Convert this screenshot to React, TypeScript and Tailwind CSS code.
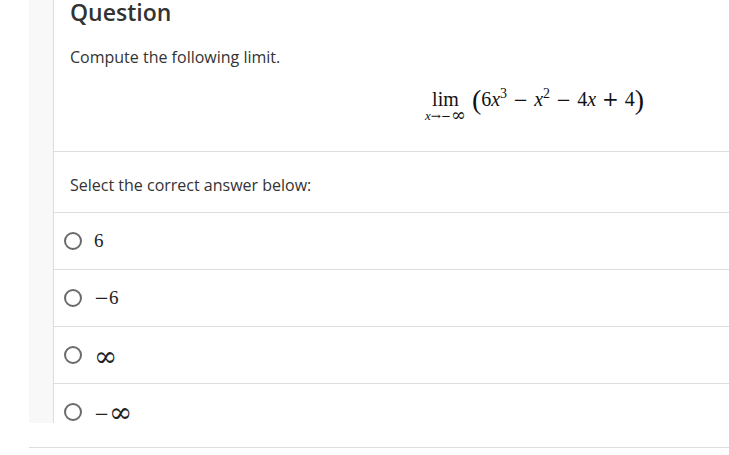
import React from "react";

const serif = { fontFamily: '"Liberation Serif", "DejaVu Serif", serif' };
const dv = { fontFamily: '"DejaVu Serif", serif' };
const dvl = { fontFamily: '"DejaVu Sans", "DejaVu Serif", serif' };

function Radio() {
  return <span className="block w-[18px] h-[18px] shrink-0 rounded-full border-2 border-[#6b6b6b] bg-white" />;
}

function Option({ children }: { children: React.ReactNode }) {
  return (
    <div className="h-[57px] shrink-0 border-b border-[#dddddd] flex items-center pl-[10px] gap-[12px]">
      <Radio />
      <span className="text-[19px] leading-[24px] text-[#222] flex items-baseline" style={serif}>
        {children}
      </span>
    </div>
  );
}

function X() {
  return <span className="italic">x</span>;
}

function Minus({ cls = "" }: { cls?: string }) {
  return (
    <span className={"font-light " + cls} style={dv}>
      −
    </span>
  );
}

function Inf({ cls = "" }: { cls?: string }) {
  return (
    <span className={"font-extralight " + cls} style={dvl}>
      ∞
    </span>
  );
}

export default function App() {
  return (
    <div
      className="w-[729px] h-[455px] bg-white overflow-hidden text-[#333333]"
      style={{ fontFamily: '"Open Sans", "Noto Sans", sans-serif' }}
    >
      <div className="ml-[29px] flex h-[423px] overflow-hidden">
        <div className="w-[25px] shrink-0 bg-[#f8f8f8] border-r border-[#dddddd]" />
        <div className="flex-1 flex flex-col">
          <section className="h-[152px] shrink-0 border-b border-[#dddddd] pl-[16px]">
            <h2 className="text-[23px] leading-[24px] font-semibold text-[#333]">Question</h2>
            <p className="mt-[21px] text-[16px] leading-[24px]">Compute the following limit.</p>
            <div className="mt-[16px] pl-[355px] flex items-baseline text-[#111]" style={serif}>
              <span className="inline-flex flex-col items-center">
                <span className="text-[20px] leading-[24px]">lim</span>
                <span className="text-[13px] leading-[14px] -mt-[4px] whitespace-nowrap flex items-baseline">
                  <X />
                  <span style={dv} className="text-[12px]">→−</span>
                  <Inf cls="text-[18px] leading-[14px] relative top-[1px]" />
                </span>
              </span>
              <span className="text-[20px] leading-[24px] ml-[6px] whitespace-nowrap flex items-baseline">
                <span className="text-[28px] leading-[24px] relative top-[3px]">(</span>
                <span>6</span>
                <X />
                <span className="text-[14px] relative -top-[8px]">3</span>
                <Minus cls="mx-[6px] text-[18px]" />
                <X />
                <span className="text-[14px] relative -top-[8px]">2</span>
                <Minus cls="mx-[6px] text-[18px]" />
                <span>4</span>
                <X />
                <span className="mx-[6px]" style={dv}>+</span>
                <span>4</span>
                <span className="text-[28px] leading-[24px] relative top-[3px]">)</span>
              </span>
            </div>
          </section>
          <section className="h-[61px] shrink-0 border-b border-[#dddddd] pl-[16px] pt-[21px]">
            <p className="text-[16px] leading-[24px]">Select the correct answer below:</p>
          </section>
          <Option>6</Option>
          <Option>
            <Minus cls="text-[18px]" />6
          </Option>
          <Option>
            <Inf cls="text-[28px] leading-[24px] relative top-[2px]" />
          </Option>
          <Option>
            <Minus cls="text-[18px]" />
            <Inf cls="text-[28px] leading-[24px] relative top-[2px]" />
          </Option>
        </div>
      </div>
      <div className="ml-[29px] mt-[24px] border-t border-[#dddddd]" />
    </div>
  );
}
